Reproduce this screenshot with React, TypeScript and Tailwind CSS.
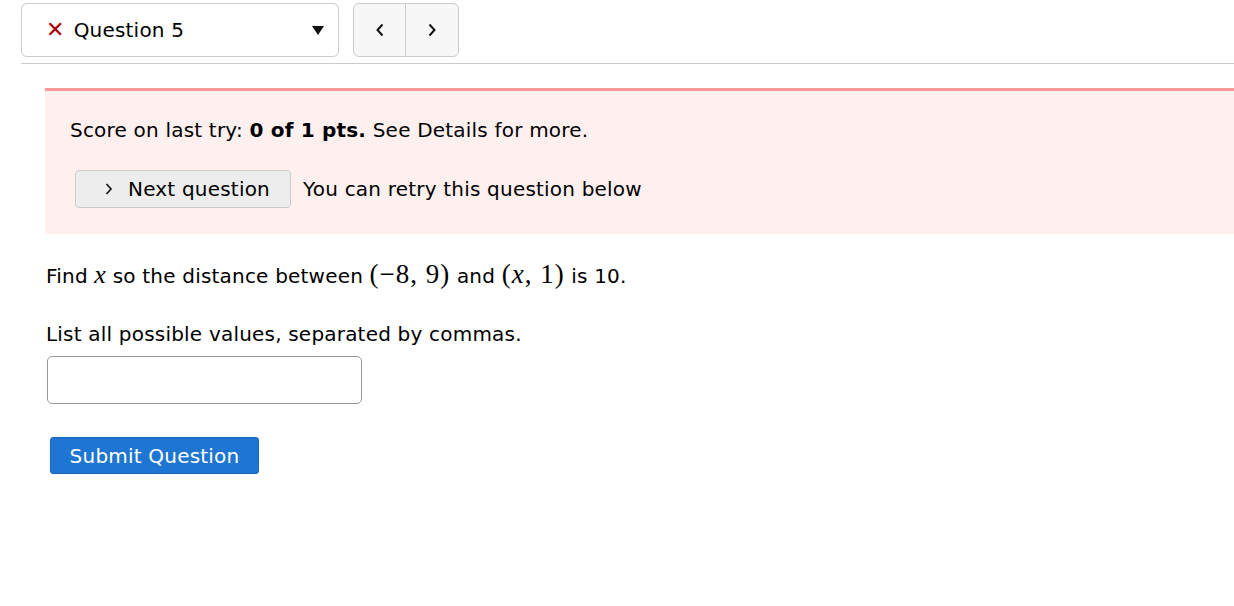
import React from "react";

export default function App() {
  return (
    <div className="w-[1234px] h-[606px] bg-white text-black overflow-hidden">
      <div className="font-['DejaVu_Sans',sans-serif] text-[20px] tracking-[0.2px]">
        {/* question nav */}
        <div className="flex items-center gap-[14px] pl-[21px] pt-[3px]">
          <div className="w-[318px] h-[54px] border border-[#ccc] rounded-[6px] flex items-center pl-[24px] pr-[14px]">
            <span className="text-[#a00] text-[22px] leading-none mr-[9px]">✕</span>
            <span className="flex-1">Question 5</span>
            <svg width="12" height="9" viewBox="0 0 12 9">
              <path d="M0 0 H12 L6 9 Z" fill="#111" />
            </svg>
          </div>
          <div className="flex h-[54px] border border-[#ccc] rounded-[6px] bg-[#f7f7f7] overflow-hidden">
            <button className="w-[52px] flex items-center justify-center border-r border-[#ccc]">
              <svg width="10" height="14" viewBox="0 0 10 14">
                <path d="M7.5 1.5 L2.5 7 L7.5 12.5" stroke="#111" strokeWidth="2" fill="none" />
              </svg>
            </button>
            <button className="w-[52px] flex items-center justify-center">
              <svg width="10" height="14" viewBox="0 0 10 14">
                <path d="M2.5 1.5 L7.5 7 L2.5 12.5" stroke="#111" strokeWidth="2" fill="none" />
              </svg>
            </button>
          </div>
        </div>
        <div className="ml-[21px] mt-[6px] border-t border-[#ccc]" />

        {/* alert */}
        <div className="ml-[45px] mt-[24px] border-t-[3px] border-[#f99] bg-[#fff0f0] h-[146px] pl-[25px] pt-[26px]">
          <p className="leading-[26px]">
            Score on last try: <b>0 of 1 pts.</b> See Details for more.
          </p>
          <div className="flex items-center mt-[27px] pl-[5px]">
            <button className="h-[38px] w-[216px] bg-[#ededed] border border-[#ccc] rounded-[4px] flex items-center pl-[29px] gap-[15px]">
              <svg width="8" height="12" viewBox="0 0 8 12">
                <path d="M1.5 1 L6 6 L1.5 11" stroke="#111" strokeWidth="1.6" fill="none" />
              </svg>
              Next question
            </button>
            <span className="ml-[12px]">You can retry this question below</span>
          </div>
        </div>

        {/* question */}
        <div className="pl-[46px] pt-[26px]">
          <p className="h-[32px] leading-[32px]">
            Find <span className="font-['Liberation_Serif',serif] italic text-[26px] leading-[20px]">x</span> so the distance between{" "}
            <span className="font-['Liberation_Serif',serif] text-[27px] tracking-[1px] leading-[20px]">(−8, 9)</span> and{" "}
            <span className="font-['Liberation_Serif',serif] text-[27px] tracking-[1px] leading-[20px]">
              (<i>x</i>, 1)
            </span>{" "}
            is 10.
          </p>
          <p className="mt-[28px] leading-[28px]">List all possible values, separated by commas.</p>
          <input
            type="text"
            className="block mt-[8px] ml-[1px] w-[315px] h-[48px] border border-[#999] rounded-[5px] outline-none"
          />
          <button className="mt-[33px] ml-[4px] h-[37px] w-[209px] bg-[#1f76d2] text-white rounded-[3px] border border-[#1a66b8]">
            Submit Question
          </button>
        </div>
      </div>
    </div>
  );
}
